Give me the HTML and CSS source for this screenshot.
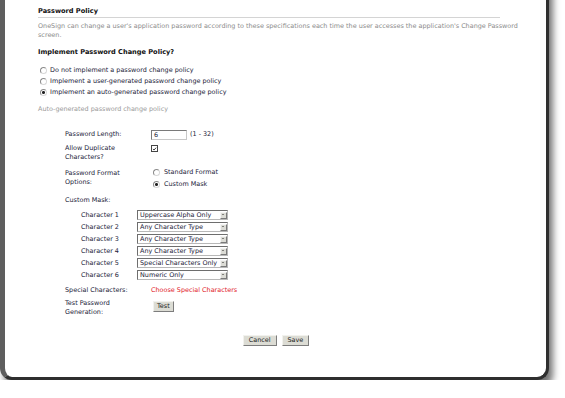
FILE: index.html
```html
<!DOCTYPE html>
<html>
  <head>
    <link rel="stylesheet" href="styles.css">
  </head>
  <body>
    <div class="card">
      <h2 class="title">Password Policy</h2>
      <div class="rule"></div>
      <p class="desc">
        OneSign can change a user's application password according to these specifications each time the user accesses the application's Change Password screen.
      </p>

      <h3 class="question">Implement Password Change Policy?</h3>
      <div class="choices">
        <label class="choice"><input type="radio" name="policy"> Do not implement a password change policy</label>
        <label class="choice"><input type="radio" name="policy"> Implement a user-generated password change policy</label>
        <label class="choice"><input type="radio" name="policy" checked> Implement an auto-generated password change policy</label>
      </div>

      <div class="subhead">Auto-generated password change policy</div>

      <div class="form">
        <div class="row row-length">
          <div class="label">Password Length:</div>
          <div class="control">
            <span class="textbox">6</span>
            <span class="hint">(1 - 32)</span>
          </div>
        </div>

        <div class="row row-dup">
          <div class="label">Allow Duplicate<br>Characters?</div>
          <div class="control">
            <span class="checkbox">
              <svg viewBox="0 0 7 7" width="7" height="7"><path d="M1.3 3.4 L2.8 5 L5.8 1.6" fill="none" stroke="#222" stroke-width="1.2"/></svg>
            </span>
          </div>
        </div>

        <div class="row row-format">
          <div class="label">Password Format<br>Options:</div>
          <div class="control format-options">
            <label class="choice"><input type="radio" name="format"> Standard Format</label>
            <label class="choice"><input type="radio" name="format" checked> Custom Mask</label>
          </div>
        </div>

        <div class="row row-mask">
          <div class="label">Custom Mask:</div>
        </div>

        <div class="mask">
          <div class="mask-row"><span>Character 1</span><span class="select"><span class="value">Uppercase Alpha Only</span><span class="arrow"></span></span></div>
          <div class="mask-row"><span>Character 2</span><span class="select"><span class="value">Any Character Type</span><span class="arrow"></span></span></div>
          <div class="mask-row"><span>Character 3</span><span class="select"><span class="value">Any Character Type</span><span class="arrow"></span></span></div>
          <div class="mask-row"><span>Character 4</span><span class="select"><span class="value">Any Character Type</span><span class="arrow"></span></span></div>
          <div class="mask-row"><span>Character 5</span><span class="select"><span class="value">Special Characters Only</span><span class="arrow"></span></span></div>
          <div class="mask-row"><span>Character 6</span><span class="select"><span class="value">Numeric Only</span><span class="arrow"></span></span></div>
        </div>

        <div class="row row-special">
          <div class="label">Special Characters:</div>
          <div class="control"><a class="link" href="#">Choose Special Characters</a></div>
        </div>

        <div class="row row-test">
          <div class="label">Test Password<br>Generation:</div>
          <div class="control"><button class="btn btn-test">Test</button></div>
        </div>
      </div>

      <div class="actions">
        <button class="btn">Cancel</button>
        <button class="btn">Save</button>
      </div>
    </div>
  </body>
</html>
```

FILE: styles.css
```css
body {
  margin: 0;
  background: #fff;
  font-family: "DejaVu Sans", Verdana, sans-serif;
  font-size: 6.45px;
  line-height: 9px;
  color: #23233a;
  overflow: hidden;
}
.card {
  box-sizing: border-box;
  width: 549px;
  height: 400px;
  margin-top: -20px;
  padding: 27px 14px 0 33px;
  background: #fff;
  border-left: 5px solid #5e5e5e;
  border-right: 3px solid #2f2f2f;
  border-bottom: 3px solid #2f2f2f;
  border-radius: 0 0 12px 12px;
  box-shadow: 4px 7px 7px rgba(0, 0, 0, 0.55);
}
.title {
  margin: 0;
  font-size: 6.6px;
  line-height: 9px;
  font-weight: bold;
  color: #111;
}
.rule {
  width: 462px;
  height: 0;
  margin-top: 1px;
  border-top: 1px solid #d4d4d4;
}
.desc {
  margin: 4px 0 0;
  line-height: 8.5px;
  color: #8c8c8c;
}
.question {
  margin: 9px 0 0;
  font-size: 6.6px;
  line-height: 9px;
  font-weight: bold;
  color: #111;
}
.choices {
  margin-top: 8px;
  padding-left: 2px;
}
.choice {
  display: flex;
  align-items: center;
  gap: 3px;
  height: 11px;
}
.choice input {
  appearance: none;
  box-sizing: border-box;
  width: 7px;
  height: 7px;
  margin: 0;
  border: 1px solid #8a8a8a;
  border-right-color: #d8d8d8;
  border-bottom-color: #d8d8d8;
  border-radius: 50%;
  background: #fff;
}
.choice input:checked {
  background: radial-gradient(circle, #222 0 1.3px, #fff 1.6px);
}
.subhead {
  margin-top: 7px;
  color: #9a9a9a;
}
.form {
  margin-top: 15px;
  padding-left: 27px;
}
.row {
  display: grid;
  grid-template-columns: 86px auto;
}
.control {
  display: flex;
  align-items: center;
  gap: 3px;
}
.textbox {
  box-sizing: border-box;
  width: 36px;
  height: 10px;
  padding-left: 2px;
  line-height: 8px;
  border: 1px solid #7a7a7a;
  border-right-color: #c8c8c8;
  border-bottom-color: #c8c8c8;
}
.row-length {
  align-items: center;
  height: 11px;
}
.row-dup {
  margin-top: 4px;
}
.row-dup .control {
  align-items: flex-start;
  padding-top: 1px;
}
.checkbox {
  box-sizing: border-box;
  display: flex;
  width: 7px;
  height: 7px;
  border: 1px solid #444;
  align-items: center;
  justify-content: center;
}
.checkbox svg {
  width: 6px;
  height: 6px;
}
.row-format {
  margin-top: 7px;
}
.format-options {
  flex-direction: column;
  align-items: flex-start;
  gap: 1px;
  margin-top: -2px;
  padding-left: 2px;
}
.format-options .choice {
  gap: 4px;
}
.row-mask {
  margin-top: 6px;
}
.mask {
  margin-top: 4px;
  padding-left: 16px;
}
.mask-row {
  display: grid;
  grid-template-columns: 56px auto;
  align-items: center;
  height: 12px;
}
.select {
  box-sizing: border-box;
  display: flex;
  width: 91px;
  height: 10px;
  border: 1px solid #6e6e6e;
  border-right-color: #b8b8b8;
  border-bottom-color: #b8b8b8;
  background: #fff;
}
.select .value {
  flex: 1;
  padding-left: 2px;
  line-height: 8px;
  white-space: nowrap;
  overflow: hidden;
}
.select .arrow {
  position: relative;
  box-sizing: border-box;
  width: 7px;
  height: 7px;
  margin: 0.5px 0.5px 0 0;
  background: #dcdcd6;
  border: 1px solid #f4f4f4;
  border-right-color: #7a7a7a;
  border-bottom-color: #7a7a7a;
}
.select .arrow::after {
  content: "";
  position: absolute;
  left: 1px;
  top: 1.5px;
  border-left: 1.5px solid transparent;
  border-right: 1.5px solid transparent;
  border-top: 1.5px solid #222;
}
.row-special {
  margin-top: 5px;
}
.link {
  color: #e2232c;
  text-decoration: none;
}
.row-test {
  margin-top: 4px;
}
.row-test .control {
  align-items: flex-start;
  padding-left: 2px;
  padding-top: 2px;
}
.btn {
  font-family: inherit;
  font-size: 6.45px;
  line-height: 9px;
  color: #222;
  margin: 0;
  padding: 0 3px;
  height: 11px;
  background: #dcdcd4;
  border: 1px solid #f2f2ee;
  border-right-color: #7d7d7d;
  border-bottom-color: #7d7d7d;
}
.actions {
  display: flex;
  justify-content: center;
  gap: 5px;
  margin-top: 18px;
  padding-right: 18px;
}
.actions .btn {
  padding: 0 5px;
}
```
